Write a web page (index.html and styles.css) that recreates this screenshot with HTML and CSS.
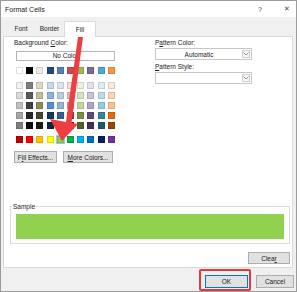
FILE: index.html
```html
<!DOCTYPE html>
<html lang="en">
<head>
    <meta charset="UTF-8">
    <title>Format Cells</title>
    <link rel="stylesheet" href="styles.css">
</head>
<body>
    <div class="window">
        <div class="titlebar">
            <span class="title">Format Cells</span>
            <span class="help">?</span>
            <span class="close">&#x2715;</span>
        </div>
        <div class="tabs">
            <span class="tab tab-font">Font</span>
            <span class="tab tab-border">Border</span>
            <span class="tab tab-fill">Fill</span>
        </div>
        <div class="panel">
            <div class="columns">
                <div class="col-left">
                    <div class="label">Background <u>C</u>olor:</div>
                    <button class="no-color">No Color</button>
                    <div class="swatches theme-row" id="themeRow"></div>
                    <div class="swatches shades" id="shades"></div>
                    <div class="swatches standard" id="standard"></div>
                    <div class="btn-row">
                        <button class="btn fill-effects">F<u>i</u>ll Effects...</button>
                        <button class="btn more-colors"><u>M</u>ore Colors...</button>
                    </div>
                </div>
                <div class="col-right">
                    <div class="label">P<u>a</u>ttern Color:</div>
                    <div class="select">
                        <span class="select-text">Automatic</span>
                        <span class="select-arrow"><svg width="6" height="4" viewBox="0 0 6 4"><polyline points="0.5,0.5 3,3 5.5,0.5" fill="none" stroke="#777" stroke-width="0.8"/></svg></span>
                    </div>
                    <div class="label label-gap"><u>P</u>attern Style:</div>
                    <div class="select">
                        <span class="select-text"></span>
                        <span class="select-arrow"><svg width="6" height="4" viewBox="0 0 6 4"><polyline points="0.5,0.5 3,3 5.5,0.5" fill="none" stroke="#777" stroke-width="0.8"/></svg></span>
                    </div>
                </div>
            </div>
            <fieldset class="sample">
                <legend>Sample</legend>
                <div class="sample-fill"></div>
            </fieldset>
            <div class="clear-row">
                <button class="btn clear">Clea<u>r</u></button>
            </div>
        </div>
        <div class="footer">
            <span class="ok-wrap"><button class="btn ok">OK</button></span>
            <button class="btn cancel">Cancel</button>
        </div>

        <!-- red annotation arrow -->
        <svg class="annotation" width="297" height="292" viewBox="0 0 297 292">
            <polygon points="78,37 83,37 71.5,122.8 78,124 62,141 50,119 66,121.9" fill="#ef3e42"/>
        </svg>
    </div>

    <script>
        const themeColors = ['#ffffff', '#000000', '#eeece1', '#1f497d', '#4f81bd', '#c0504d', '#9bbb59', '#8064a2', '#4bacc6', '#f79646'];
        const shadeRows = [
            ['#f2f2f2', '#7f7f7f', '#ddd9c3', '#c6d9f0', '#dbe5f1', '#f2dcdb', '#ebf1dd', '#e5e0ec', '#dbeef3', '#fdeada'],
            ['#d9d9d9', '#595959', '#c4bd97', '#8db3e2', '#b8cce4', '#e5b9b7', '#d7e3bc', '#ccc1d9', '#b7dde8', '#fbd5b5'],
            ['#bfbfbf', '#3f3f3f', '#938953', '#548dd4', '#95b3d7', '#d99694', '#c3d69b', '#b2a2c7', '#92cddc', '#fac08f'],
            ['#a5a5a5', '#262626', '#494429', '#17365d', '#366092', '#953734', '#76923c', '#5f497a', '#31859b', '#e36c09'],
            ['#7f7f7f', '#0c0c0c', '#1d1b10', '#0f243e', '#244061', '#632423', '#4f6128', '#3f3151', '#205867', '#974806']
        ];
        const standardColors = ['#c00000', '#ff0000', '#ffc000', '#ffff00', '#92d050', '#00b050', '#00b0f0', '#0070c0', '#002060', '#7030a0'];

        function addSwatches(container, colors, selected) {
            colors.forEach((color, i) => {
                const sw = document.createElement('span');
                sw.className = 'swatch' + (i === selected ? ' selected' : '');
                sw.style.background = color;
                container.appendChild(sw);
            });
        }

        addSwatches(document.getElementById('themeRow'), themeColors, -1);
        shadeRows.forEach(row => addSwatches(document.getElementById('shades'), row, -1));
        addSwatches(document.getElementById('standard'), standardColors, 4);
    </script>
</body>
</html>
```

FILE: styles.css
```css
* {
    box-sizing: border-box;
}
body {
    margin: 0;
    background: #ffffff;
    font-family: "Liberation Sans", Arial, sans-serif;
    font-size: 6.5px;
    color: #222;
}
.window {
    position: relative;
    width: 297px;
    height: 292px;
    border: 1px solid #9b9b9b;
    background: #f0f0f0;
    display: flex;
    flex-direction: column;
}
.titlebar {
    height: 16px;
    background: #ffffff;
    display: flex;
    align-items: center;
    padding: 0 2px 0 4px;
    font-size: 7px;
}
.title {
    flex: 1;
}
.help {
    width: 10px;
    text-align: center;
    color: #444;
}
.close {
    width: 14px;
    margin-left: 15px;
    text-align: center;
    font-size: 7px;
    color: #444;
}
.tabs {
    height: 19px;
    display: flex;
    align-items: flex-end;
    padding-left: 6px;
}
.tab {
    height: 15px;
    display: flex;
    align-items: center;
    justify-content: center;
}
.tab-font {
    width: 28px;
}
.tab-border {
    width: 29px;
}
.tab-fill {
    width: 32px;
    height: 16px;
    margin-bottom: -1px;
    background: #ffffff;
    border: 1px solid #d9d9d9;
    border-bottom: none;
    position: relative;
    z-index: 1;
}
.panel {
    height: 232px;
    margin: 0 3px 0 2px;
    background: #ffffff;
    border: 1px solid #d9d9d9;
}
.columns {
    display: flex;
    padding: 1px 0 0 10px;
}
.col-left {
    width: 101px;
}
.col-right {
    width: 97px;
    margin-left: 40px;
}
.label {
    height: 10px;
    line-height: 10px;
    white-space: nowrap;
}
.label-gap {
    margin-top: 2px;
}
.no-color {
    display: block;
    width: 99px;
    height: 10px;
    margin: 3px 0 0 2px;
    padding: 0;
    border: 1px solid #b4b4b4;
    background: #ffffff;
    font: inherit;
    color: inherit;
    line-height: 8px;
}
.swatches {
    display: grid;
    grid-template-columns: repeat(10, 7px);
    column-gap: 3.2px;
    row-gap: 3px;
    margin-left: 2px;
}
.swatch {
    width: 7px;
    height: 7px;
    box-shadow: inset 0 0 0 1px rgba(0, 0, 0, 0.12);
}
.swatch.selected {
    outline: 1px solid #9ec5e2;
}
.theme-row {
    margin-top: 6px;
}
.shades {
    margin-top: 8px;
}
.standard {
    margin-top: 7px;
}
.btn-row {
    display: flex;
    gap: 6px;
    margin-top: 8px;
}
.btn {
    height: 12px;
    padding: 0;
    border: 1px solid #adadad;
    background: #e1e1e1;
    font: inherit;
    color: inherit;
    display: flex;
    align-items: center;
    justify-content: center;
}
.fill-effects {
    width: 43px;
}
.more-colors {
    width: 50px;
}
.select {
    height: 12px;
    border: 1px solid #c6c6c6;
    background: #ffffff;
    display: flex;
    align-items: center;
}
.select-text {
    flex: 1;
    text-align: center;
}
.select-arrow {
    width: 8px;
    height: 8px;
    margin-right: 1px;
    border: 1px solid #d0d0d0;
    background: #f6f6f6;
    display: flex;
    align-items: center;
    justify-content: center;
}
.sample {
    margin: 39px 2px 0 6px;
    padding: 3px 5px 4px;
    border: 1px solid #dcdcdc;
    min-width: 0;
}
.sample legend {
    margin-left: -4px;
    padding: 0 1px;
    line-height: 9px;
}
.sample-fill {
    height: 25px;
    background: #92d050;
}
.clear-row {
    display: flex;
    justify-content: flex-end;
    margin: 8px 2px 0 0;
}
.clear {
    width: 42px;
}
.footer {
    flex: 1;
    display: flex;
    justify-content: flex-end;
    align-items: flex-start;
    gap: 8px;
    padding: 7px 2px 0 0;
}
.footer .btn {
    height: 13px;
}
.ok-wrap {
    position: relative;
}
.ok-wrap::after {
    content: "";
    position: absolute;
    top: -6px;
    right: -3px;
    bottom: -3px;
    left: -6px;
    border: 2px solid #e4393c;
    border-radius: 2px;
}
.ok {
    width: 43px;
    border-color: #0078d7;
}
.cancel {
    width: 38px;
}
.annotation {
    position: absolute;
    left: -1px;
    top: -1px;
    pointer-events: none;
}
```
